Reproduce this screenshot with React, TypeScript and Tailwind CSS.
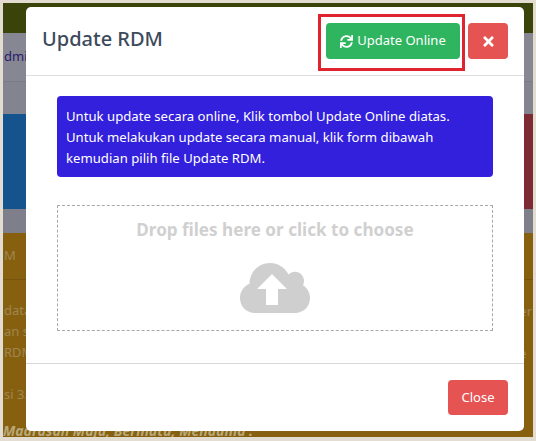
import { FaSync, FaTimes } from "react-icons/fa";

function CloudUpload() {
  return (
    <svg width="70" height="50" viewBox="0 0 70 50" className="fill-[#cfcfcf]">
      <path d="M15 50C6.500 50 0 43.500 0 35C0 28.500 4 23 9.500 20.800C9.500 9 18.500 0 30 0C38 0 45 4.500 48.500 11.500C50 10 52.500 8.800 55 8.800C60 8.800 64 13 64 18C64 19.500 63.700 21 63 22.300C67.500 25 70 30 70 35C70 43.500 63.500 50 55 50Z" />
      <path d="M32 11L47 26H38V42H26V26H17Z" className="fill-white" />
    </svg>
  );
}

export default function App() {
  return (
    <div className="relative h-[441px] w-[536px] overflow-hidden bg-[#e2ddd0] pt-[3px] pr-[3px] pb-[4px] pl-[3px] font-['Noto_Sans',sans-serif]">
      <div className="flex h-full flex-col text-[13px]">
        <div className="h-[30px] bg-[#39430a]" />
        <div className="flex h-[48px] items-center bg-[#878794] text-[#2a1a6b]">
          <span className="ml-[1px]">dmin</span>
        </div>
        <div className="h-[33px] border-t border-[#7b7b88] bg-[#848491]" />
        <div className="flex h-[95px] justify-between bg-[#848491]">
          <div className="w-[60px] bg-[#15538f]" />
          <div className="w-[60px] bg-[#7d2a35]" />
        </div>
        <div className="h-[24px] bg-[#7f7f8c]" />
        <div className="flex flex-1 flex-col overflow-hidden bg-[#86600f] text-[#a08650]">
          <div className="flex h-[47px] shrink-0 items-center border-b border-[#775410]">
            <span className="ml-[1px]">M</span>
          </div>
          <div className="flex justify-between pt-[20px] leading-[21px]">
            <div className="ml-[1px]">
              <p>data</p>
              <p>an s</p>
              <p>RDM</p>
              <p className="mt-[21px]">si 3.</p>
            </div>
            <div className="mr-[1px] pt-[1px]">
              <p>er</p>
              <p className="mt-[21px]">e</p>
            </div>
          </div>
          <p className="mt-auto text-[14px] leading-[13px] font-bold text-[#b9a878] italic">
            Madrasah Maju, Bermutu, Mendunia .
          </p>
        </div>
      </div>

      <div className="absolute top-[7px] left-[26px] flex h-[424px] w-[498px] flex-col rounded-[5px] bg-white">
        <div className="flex h-[69px] items-start justify-between border-b border-[#dedede] pt-[16px] pr-[16px] pl-[16px]">
          <h4 className="pt-[1px] text-[20px] leading-[30px] font-medium text-[#3d4a5c]">Update RDM</h4>
          <div className="flex gap-[8px]">
            <div className="relative">
              <div className="pointer-events-none absolute top-[-9px] right-[-5px] bottom-[-12px] left-[-8px] border-[3px] border-[#e0242f]" />
              <button className="flex h-[36px] w-[134px] items-center justify-center gap-[4px] rounded-[4px] bg-[#2fb45f] text-[13px] text-white">
                <FaSync size={13} />
                Update Online
              </button>
            </div>
            <button className="flex h-[36px] w-[40px] items-center justify-center rounded-[4px] bg-[#e55353] text-white">
              <FaTimes size={15} />
            </button>
          </div>
        </div>

        <div className="flex-1 border-b border-[#d8d8d8] px-[31px] pt-[20px]">
          <div className="h-[81px] rounded-[4px] bg-[#3320dc] px-[9px] pt-[10px] text-[13.15px] leading-[21px] text-white">
            <p>Untuk update secara online, Klik tombol Update Online diatas.</p>
            <p>Untuk melakukan update secara manual, klik form dibawah</p>
            <p>kemudian pilih file Update RDM.</p>
          </div>
          <div className="mt-[28px] flex h-[126px] flex-col items-center border border-dashed border-[#a8a8a8] pt-[11px]">
            <p className="text-[17.1px] leading-[26px] font-bold text-[#d0d0d0]">Drop files here or click to choose</p>
            <div className="mt-[20px]">
              <CloudUpload />
            </div>
          </div>
        </div>

        <div className="flex h-[67px] items-start justify-end pt-[16px] pr-[16px]">
          <button className="h-[35px] w-[60px] rounded-[4px] bg-[#e55353] text-[13px] text-white">Close</button>
        </div>
      </div>
    </div>
  );
}
